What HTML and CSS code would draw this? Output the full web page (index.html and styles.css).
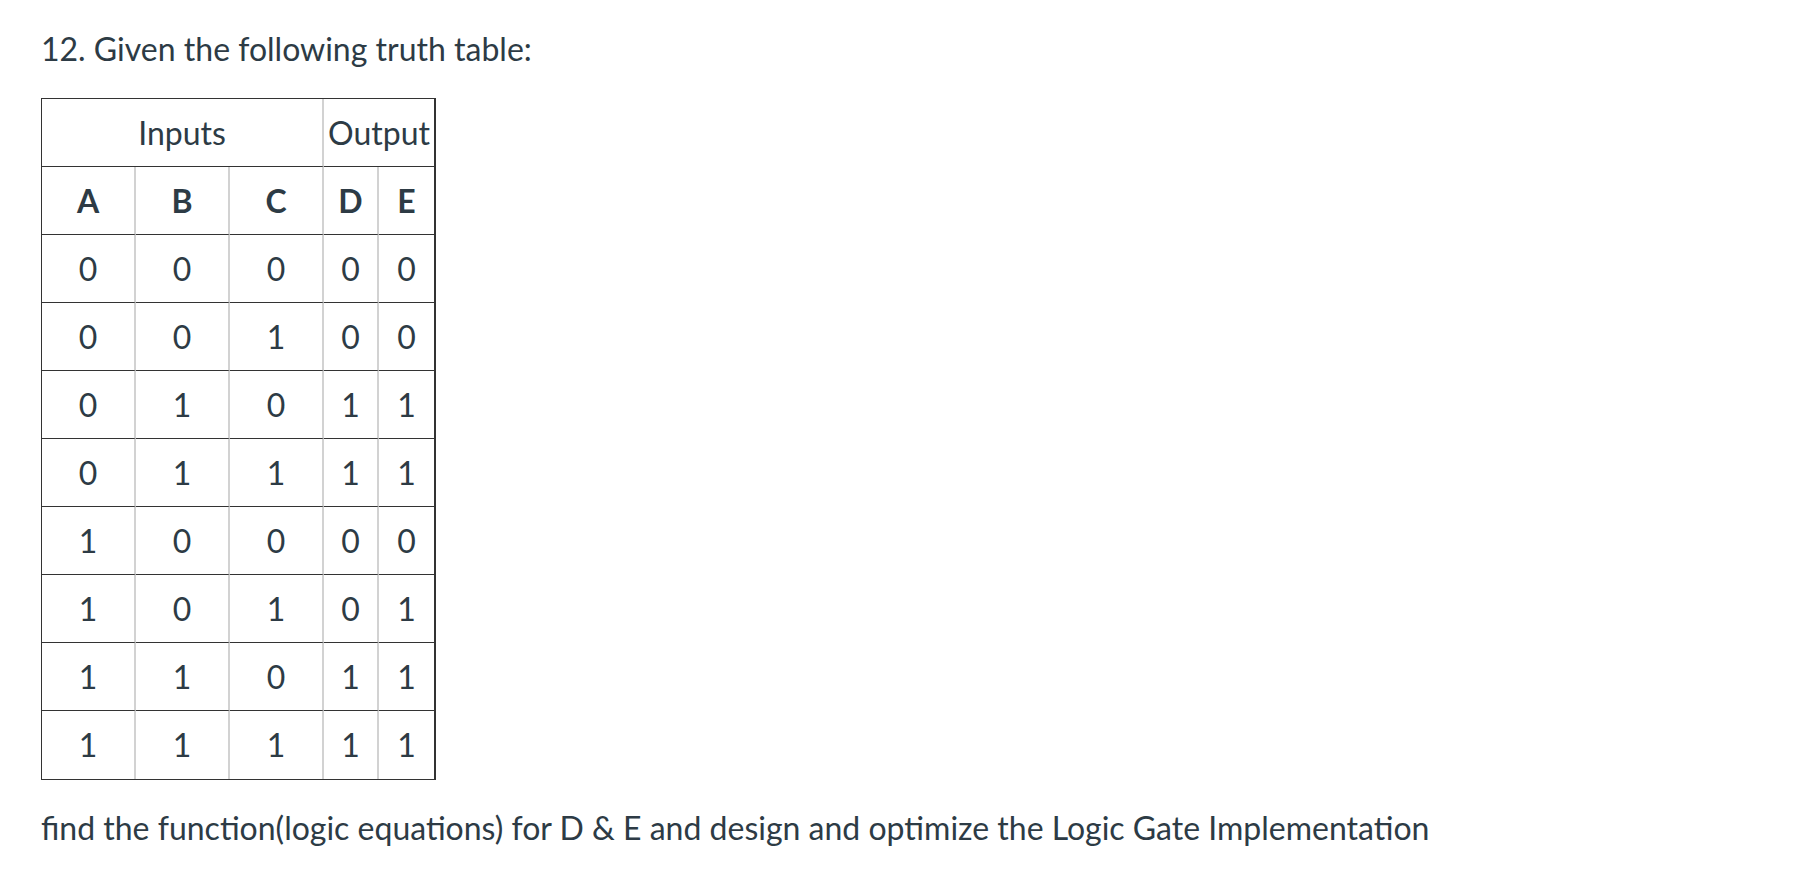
FILE: index.html
```html
<!DOCTYPE html>
<html>
<head>
<meta charset="utf-8">
<link rel="stylesheet" href="styles.css">
</head>
<body>
<div class="question">
  <p class="title">12. Given the following truth table:</p>
  <table class="truth">
    <colgroup>
      <col class="c-wide"><col class="c-wide"><col class="c-wide"><col class="c-narrow"><col class="c-narrow">
    </colgroup>
    <tr><td colspan="3">Inputs</td><td colspan="2" class="last">Output</td></tr>
    <tr class="head"><td>A</td><td>B</td><td>C</td><td>D</td><td class="last">E</td></tr>
    <tr><td>0</td><td>0</td><td>0</td><td>0</td><td class="last">0</td></tr>
    <tr><td>0</td><td>0</td><td>1</td><td>0</td><td class="last">0</td></tr>
    <tr><td>0</td><td>1</td><td>0</td><td>1</td><td class="last">1</td></tr>
    <tr><td>0</td><td>1</td><td>1</td><td>1</td><td class="last">1</td></tr>
    <tr><td>1</td><td>0</td><td>0</td><td>0</td><td class="last">0</td></tr>
    <tr><td>1</td><td>0</td><td>1</td><td>0</td><td class="last">1</td></tr>
    <tr><td>1</td><td>1</td><td>0</td><td>1</td><td class="last">1</td></tr>
    <tr class="bottom"><td>1</td><td>1</td><td>1</td><td>1</td><td class="last">1</td></tr>
  </table>
  <p class="task">find the function(logic equations) for D &amp; E and design and optimize the Logic Gate Implementation</p>
</div>
</body>
</html>
```
FILE: styles.css
```css
html, body {
  margin: 0;
  padding: 0;
  background: #ffffff;
}
body {
  font-family: Lato, "Open Sans", sans-serif;
  font-size: 32px;
  line-height: 48px;
  color: #2d3b45;
}
.question {
  padding: 25px 0 0 41px;
}
.title {
  margin: 0 0 25px 0;
}
.truth {
  border-collapse: separate;
  border-spacing: 0;
  table-layout: fixed;
  width: 394px;
  border-top: 1px solid #333333;
  border-left: 1px solid #333333;
  border-right: 2px solid #333333;
  border-bottom: 1px solid #333333;
}
.c-wide { width: 94px; }
.c-narrow { width: 55px; }
.truth td {
  height: 68px;
  padding: 0;
  text-align: center;
  vertical-align: middle;
  border-right: 2px solid #d2d2d2;
  border-bottom: 1px solid #333333;
  box-sizing: border-box;
  line-height: 38px;
}
.truth td.last {
  border-right: none;
}
.truth tr.bottom td {
  border-bottom: none;
}
.truth tr.head td {
  font-weight: 700;
}
.task {
  margin: 24px 0 0 0;
}
```
